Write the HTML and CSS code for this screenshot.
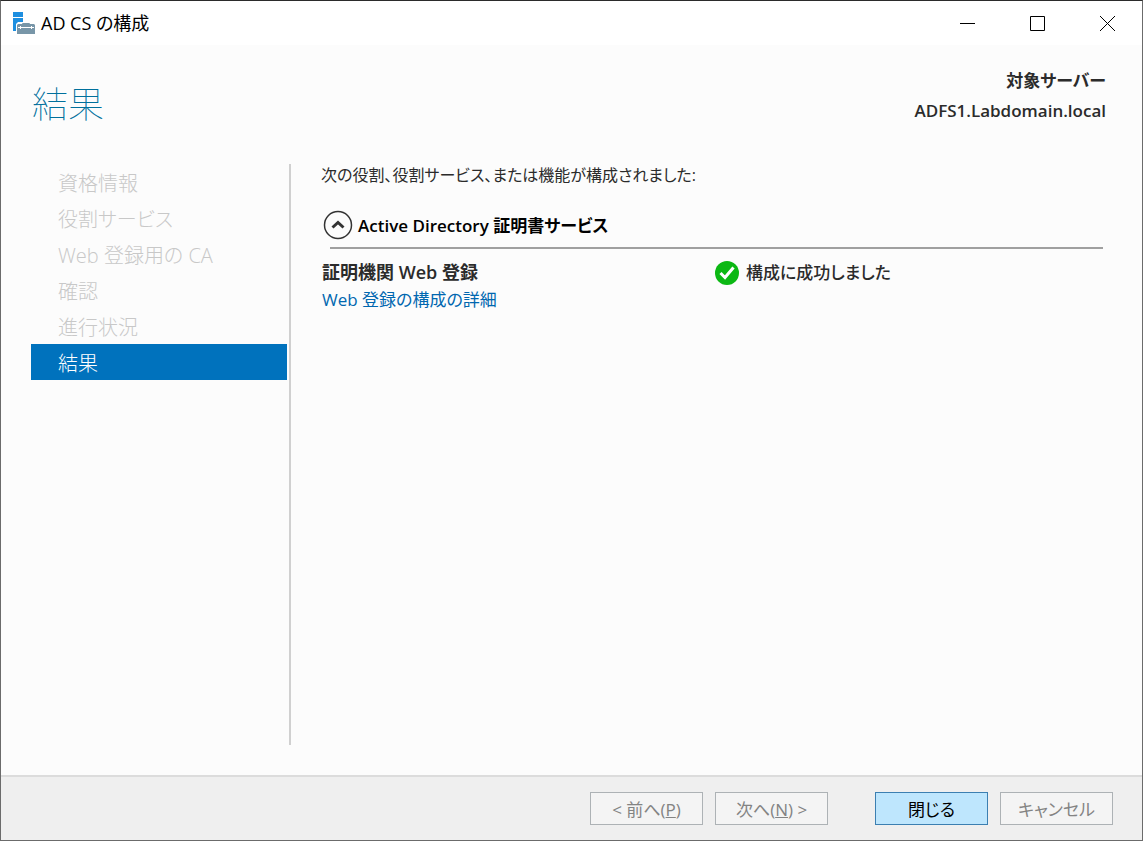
FILE: index.html
```html
<!DOCTYPE html>
<html lang="ja">
<head>
    <meta charset="UTF-8">
    <title>AD CS の構成</title>
    <link rel="stylesheet" href="styles.css">
</head>
<body>
<div class="window">
    <div class="titlebar">
        <svg class="logo" width="22" height="22" viewBox="0 0 22 22">
            <path fill="#1e8fe0" d="M0 0h10v5H0zM0 6h10v4H5L3 12v7H0z"/>
            <path fill="none" stroke="#7896a8" d="M9.500 13v-1.500h7V13"/>
            <path fill="#7896a8" d="M5 12h16l1 1v9H4v-9z"/>
            <path fill="none" stroke="#fff" d="M5 15.500h16M7.500 14v3M18.500 14v3"/>
        </svg>
        <span class="caption">AD CS の構成</span>
        <div class="controls">
            <button type="button" aria-label="最小化">
                <svg width="15" height="15" viewBox="0 0 15 15"><path d="M0 7.500h15"/></svg>
            </button>
            <button type="button" aria-label="最大化">
                <svg width="15" height="15" viewBox="0 0 15 15"><path d="M.5.5h14v14H.5z"/></svg>
            </button>
            <button type="button" aria-label="閉じる">
                <svg width="15" height="15" viewBox="0 0 15 15"><path d="M0 0l15 15M15 0L0 15"/></svg>
            </button>
        </div>
    </div>
    <div class="header">
        <h1>結果</h1>
        <div class="server">
            <p>対象サーバー</p>
            <p>ADFS1.Labdomain.local</p>
        </div>
    </div>
    <div class="main">
        <ul class="steps">
            <li>資格情報</li>
            <li>役割サービス</li>
            <li>Web 登録用の CA</li>
            <li>確認</li>
            <li>進行状況</li>
            <li class="active">結果</li>
        </ul>
        <div class="content">
            <p class="message">次の役割、役割サービス、または機能が構成されました:</p>
            <div class="group">
                <button type="button" class="toggle" aria-label="折りたたむ">
                    <svg width="30" height="30" viewBox="0 0 30 30" fill="none" stroke="#333">
                        <circle cx="15" cy="15" r="13.500" stroke-width="1.500"/>
                        <path d="M9.500 17.500l5.500-5 5.500 5" stroke-width="3"/>
                    </svg>
                </button>
                <h2>Active Directory 証明書サービス</h2>
            </div>
            <div class="result">
                <div>
                    <h3>証明機関 Web 登録</h3>
                    <a href="#">Web 登録の構成の詳細</a>
                </div>
                <div class="status">
                    <svg width="24" height="24" viewBox="0 0 24 24">
                        <circle cx="12" cy="12" r="12" fill="#0cb814"/>
                        <path d="M5.500 12l4.500 4.500 8.500-10" fill="none" stroke="#fff" stroke-width="3"/>
                    </svg>
                    <span>構成に成功しました</span>
                </div>
            </div>
        </div>
    </div>
    <div class="footer">
        <button type="button" disabled>&lt; 前へ(<u>P</u>)</button>
        <button type="button" disabled>次へ(<u>N</u>) &gt;</button>
        <button type="button" class="close">閉じる</button>
        <button type="button" disabled>キャンセル</button>
    </div>
</div>
</body>
</html>
```

FILE: styles.css
```css
*{
    margin: 0;
    padding: 0;
    box-sizing: border-box;
}
body,button{
    font-family: "Open Sans", "Noto Sans CJK JP", sans-serif;
    font-feature-settings: "palt";
    font-size: 17px;
}
li{
    list-style: none;
}
svg{
    display: block;
    flex: none;
}
.window{
    display: flex;
    flex-direction: column;
    min-height: 100vh;
    border: 1px solid #6b6b6b;
    border-top-color: #2b2b2b;
    background: #fcfcfc;
    color: #2b2b2b;
}
.titlebar{
    display: flex;
    align-items: center;
    height: 44px;
    padding-left: 12px;
    background: #fff;
    color: #000;
}
.caption{
    margin-left: 6px;
    padding-bottom: 2px;
    font-size: 18px;
}
.controls{
    display: flex;
    height: 100%;
    margin-left: auto;
}
.controls button{
    display: flex;
    align-items: center;
    justify-content: center;
    width: 70px;
    border: none;
    background: none;
}
.controls path{
    fill: none;
    stroke: #000;
}
.header{
    display: flex;
    justify-content: space-between;
    padding: 21px 36px 0 31px;
}
h1{
    font-size: 36px;
    font-weight: 100;
    line-height: 77px;
    color: #00709c;
}
.server{
    font-weight: 600;
    line-height: 30px;
    text-align: right;
}
.main{
    display: flex;
    flex: 1;
    padding: 21px 39px 30px 30px;
}
.steps{
    width: 260px;
    padding-right: 2px;
    border-right: 2px solid #d0d0d0;
    font-size: 20px;
    font-weight: 300;
    line-height: 40px;
    color: #c8c8c8;
}
.steps li{
    height: 36px;
    padding-left: 27px;
}
.steps .active{
    background: #0072bd;
    color: #fff;
}
.content{
    flex: 1;
    padding-left: 30px;
}
.message{
    font-size: 16px;
    line-height: 22px;
}
.group{
    position: relative;
    display: flex;
    align-items: center;
    gap: 5px;
    height: 63px;
    margin-left: 2px;
    padding-top: 14px;
}
.group::after{
    content: "";
    position: absolute;
    left: 7px;
    right: 0;
    bottom: 0;
    border-bottom: 2px solid #a0a0a0;
}
.toggle{
    border: none;
    background: none;
}
h2{
    font-size: 17px;
    font-weight: 600;
    color: #000;
}
h3{
    font-size: 18px;
    font-weight: 600;
}
.result{
    display: grid;
    grid-template-columns: 1fr 1fr;
    gap: 5px;
    margin-left: 1px;
    padding-top: 10px;
    line-height: 27px;
}
.result a{
    color: #0067b0;
    text-decoration: none;
}
.status{
    display: flex;
    align-items: center;
    gap: 7px;
    height: 27px;
    font-weight: 500;
}
.footer{
    display: flex;
    justify-content: flex-end;
    gap: 12px;
    padding: 15px 29px;
    border-top: 2px solid #dcdcdc;
    background: #efefef;
}
.footer button{
    width: 113px;
    height: 33px;
    border: 1px solid #adb2b5;
    background: #f4f4f4;
    font-size: 17px;
    color: #838383;
}
.footer .close{
    margin-left: 35px;
    border-color: #3c7fb1;
    background: #bee6fd;
    color: #000;
}
```
